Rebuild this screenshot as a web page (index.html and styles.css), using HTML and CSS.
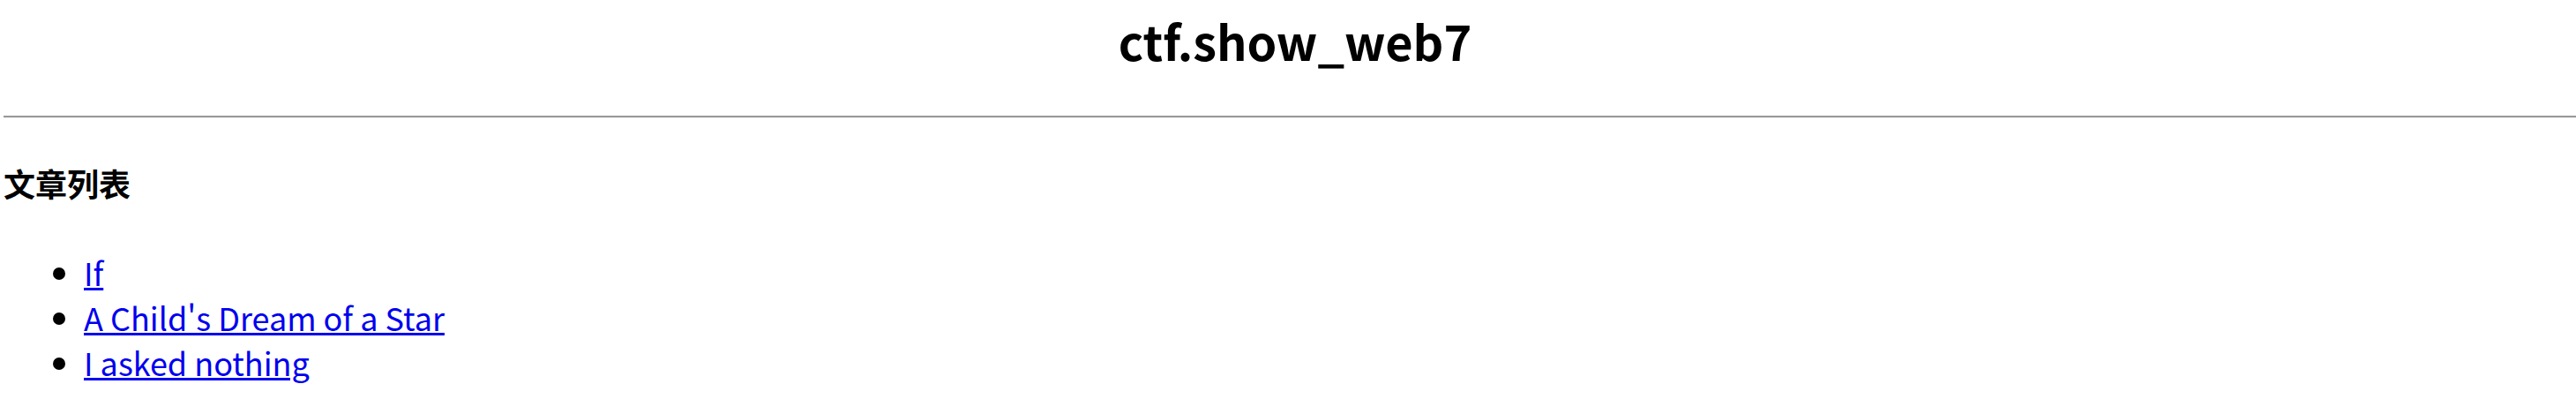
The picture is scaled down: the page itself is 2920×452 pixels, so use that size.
FILE: index.html
```html
<!DOCTYPE html>
<html lang="zh-CN">
<head>
    <meta charset="UTF-8">
    <meta name="viewport" content="width=device-width, initial-scale=1.0">
    <title>ctf.show_web7</title>
    <link rel="stylesheet" href="styles.css">
</head>
<body>
    <h1 class="title">ctf.show_web7</h1>
    <hr class="rule">
    <h3 class="list-title">文章列表</h3>
    <ul class="articles">
        <li><a href="index.php?id=1">If</a></li>
        <li><a href="index.php?id=2">A Child's Dream of a Star</a></li>
        <li><a href="index.php?id=3">I asked nothing</a></li>
    </ul>
</body>
</html>
```

FILE: styles.css
```css
body {
    font-family: "Noto Sans CJK SC", sans-serif;
    font-size: 36px;
    margin: 0 0 0 4px;
    color: #000;
    background: #fff;
}

.title {
    font-size: 54px;
    text-align: center;
    margin: 0;
    padding: 6px 0 0 12px;
}

.rule {
    margin: 46px 0 0 0;
    border: none;
    border-top: 2px solid #999;
    border-bottom: 1px solid #eee;
    height: 0;
}

.list-title {
    font-size: 36px;
    margin: 47px 0 0 0;
}

.articles {
    margin: 50px 0 0 0;
    padding-left: 91px;
    line-height: 51px;
}

.articles a {
    color: #0000ee;
}
```
